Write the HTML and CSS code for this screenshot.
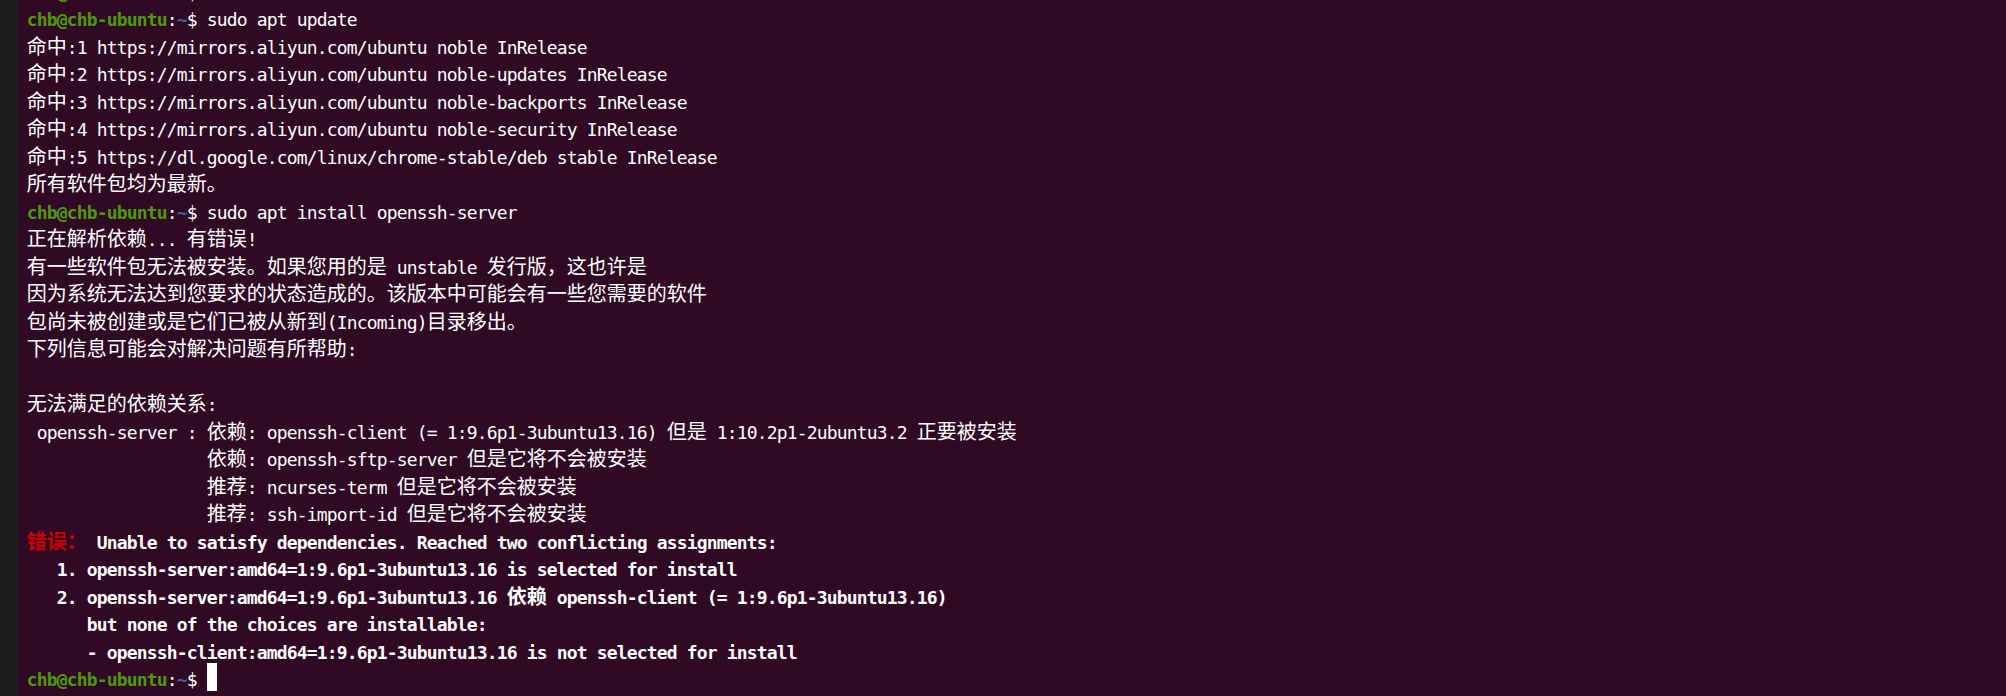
FILE: index.html
```html
<!DOCTYPE html>
<html lang="zh-CN">
<head>
<meta charset="utf-8">
<title>Terminal</title>
<link rel="stylesheet" href="styles.css">
</head>
<body>
<div class="win">
  <div class="strip"></div>
  <div class="term">
    <div class="screen">
      <div class="ln"><span class="g">chb@chb-ubuntu</span>:<span class="bl">~</span>$ </div>
      <div class="ln"><span class="g">chb@chb-ubuntu</span>:<span class="bl">~</span>$ sudo apt update</div>
      <div class="ln"><span class="c">命中</span>:1 https://mirrors.aliyun.com/ubuntu noble InRelease</div>
      <div class="ln"><span class="c">命中</span>:2 https://mirrors.aliyun.com/ubuntu noble-updates InRelease</div>
      <div class="ln"><span class="c">命中</span>:3 https://mirrors.aliyun.com/ubuntu noble-backports InRelease</div>
      <div class="ln"><span class="c">命中</span>:4 https://mirrors.aliyun.com/ubuntu noble-security InRelease</div>
      <div class="ln"><span class="c">命中</span>:5 https://dl.google.com/linux/chrome-stable/deb stable InRelease</div>
      <div class="ln"><span class="c">所有软件包均为最新。</span></div>
      <div class="ln"><span class="g">chb@chb-ubuntu</span>:<span class="bl">~</span>$ sudo apt install openssh-server</div>
      <div class="ln"><span class="c">正在解析依赖</span>... <span class="c">有错误</span>!</div>
      <div class="ln"><span class="c">有一些软件包无法被安装。如果您用的是</span> unstable <span class="c">发行版，这也许是</span></div>
      <div class="ln"><span class="c">因为系统无法达到您要求的状态造成的。该版本中可能会有一些您需要的软件</span></div>
      <div class="ln"><span class="c">包尚未被创建或是它们已被从新到</span>(Incoming)<span class="c">目录移出。</span></div>
      <div class="ln"><span class="c">下列信息可能会对解决问题有所帮助</span>:</div>
      <div class="ln"> </div>
      <div class="ln"><span class="c">无法满足的依赖关系</span>:</div>
      <div class="ln"> openssh-server : <span class="c">依赖</span>: openssh-client (= 1:9.6p1-3ubuntu13.16) <span class="c">但是</span> 1:10.2p1-2ubuntu3.2 <span class="c">正要被安装</span></div>
      <div class="ln">                  <span class="c">依赖</span>: openssh-sftp-server <span class="c">但是它将不会被安装</span></div>
      <div class="ln">                  <span class="c">推荐</span>: ncurses-term <span class="c">但是它将不会被安装</span></div>
      <div class="ln">                  <span class="c">推荐</span>: ssh-import-id <span class="c">但是它将不会被安装</span></div>
      <div class="ln b"><span class="c r">错误：</span> Unable to satisfy dependencies. Reached two conflicting assignments:</div>
      <div class="ln b">   1. openssh-server:amd64=1:9.6p1-3ubuntu13.16 is selected for install</div>
      <div class="ln b">   2. openssh-server:amd64=1:9.6p1-3ubuntu13.16 <span class="c">依赖</span> openssh-client (= 1:9.6p1-3ubuntu13.16)</div>
      <div class="ln b">      but none of the choices are installable:</div>
      <div class="ln b">      - openssh-client:amd64=1:9.6p1-3ubuntu13.16 is not selected for install</div>
      <div class="ln"><span class="g">chb@chb-ubuntu</span>:<span class="bl">~</span>$ <span class="cursor"></span></div>
    </div>
  </div>
</div>
</body>
</html>
```
FILE: styles.css
```css
html, body {
  margin: 0;
  padding: 0;
  background: #300a24;
  overflow: hidden;
}

.win {
  display: flex;
  width: 2006px;
  height: 696px;
  overflow: hidden;
}

.strip {
  flex: none;
  width: 18px;
  background: #1d1d1d;
}

.term {
  flex: 1;
  background: #300a24;
  padding-left: 8.67px;
  color: #ffffff;
  font-family: "DejaVu Sans Mono", monospace;
  font-size: 18px;
  letter-spacing: -0.837px;
  overflow: hidden;
  text-spacing-trim: space-all;
}

.screen {
  margin-top: -21.25px;
}

.ln {
  height: 27.5px;
  line-height: 27.5px;
  white-space: pre;
}

.c {
  font-family: "Noto Sans CJK SC", sans-serif;
  font-size: 20px;
  line-height: 20px;
  letter-spacing: 0;
}

.b {
  font-weight: bold;
}

.g {
  color: #4e9a06;
  font-weight: bold;
}

.bl {
  color: #3465a4;
  font-weight: bold;
}

.r {
  color: #cc0000;
  font-weight: bold;
}

.cursor {
  display: inline-block;
  width: 10px;
  height: 28px;
  margin-top: -4px;
  vertical-align: -5px;
  background: #ffffff;
}
```
